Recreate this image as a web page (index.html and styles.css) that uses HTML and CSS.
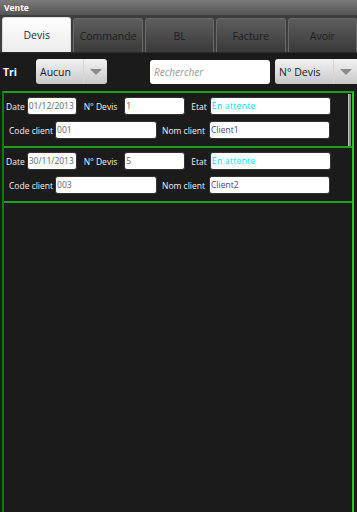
FILE: index.html
```html
<!DOCTYPE html>
<html lang="fr">
<head>
  <meta charset="UTF-8">
  <meta name="viewport" content="width=device-width, initial-scale=1.0">
  <title>Vente</title>
  <link rel="stylesheet" href="styles.css">
</head>
<body>
  <div class="title-bar">Vente</div>
  <div class="tabs">
    <div class="tab active">Devis</div>
    <div class="tab">Commande</div>
    <div class="tab">BL</div>
    <div class="tab">Facture</div>
    <div class="tab">Avoir</div>
  </div>
  <div class="toolbar">
    <span class="tri">Tri</span>
    <div class="spinner sort">
      <span class="spinner-text">Aucun</span>
      <span class="spinner-arrow"></span>
    </div>
    <div class="search">Rechercher</div>
    <div class="spinner field">
      <span class="spinner-text">N° Devis</span>
      <span class="spinner-arrow"></span>
    </div>
  </div>
  <div class="list">
    <div class="item">
      <div class="row">
        <span class="label l-date">Date</span>
        <span class="box w-date">01/12/2013</span>
        <span class="label l-num">N° Devis</span>
        <span class="box w-num">1</span>
        <span class="label l-etat">Etat</span>
        <span class="box w-wide etat">En attente</span>
      </div>
      <div class="row">
        <span class="label l-code">Code client</span>
        <span class="box w-code">001</span>
        <span class="label l-nom">Nom client</span>
        <span class="box w-wide client">Client1</span>
      </div>
      <div class="scrollbar"></div>
    </div>
    <div class="item">
      <div class="row">
        <span class="label l-date">Date</span>
        <span class="box w-date">30/11/2013</span>
        <span class="label l-num">N° Devis</span>
        <span class="box w-num">5</span>
        <span class="label l-etat">Etat</span>
        <span class="box w-wide etat">En attente</span>
      </div>
      <div class="row">
        <span class="label l-code">Code client</span>
        <span class="box w-code">003</span>
        <span class="label l-nom">Nom client</span>
        <span class="box w-wide client">Client2</span>
      </div>
    </div>
  </div>
</body>
</html>
```

FILE: styles.css
```css
* {
  margin: 0;
  padding: 0;
  box-sizing: border-box;
}
html, body {
  height: 100%;
}
body {
  display: flex;
  flex-direction: column;
  background: #1b1b1b;
  font-family: 'Open Sans', 'DejaVu Sans', sans-serif;
  overflow: hidden;
}
.title-bar {
  height: 15px;
  background: linear-gradient(#7b7b7b, #545454);
  color: #fff;
  font-size: 8.5px;
  font-weight: bold;
  line-height: 15px;
  padding-left: 4px;
}
.tabs {
  display: flex;
  gap: 2px;
  height: 38px;
  padding: 2px 0 0 2px;
  background: #3d3d3d;
  border-bottom: 1px solid #2a2a2a;
}
.tab {
  flex: 1;
  display: flex;
  align-items: center;
  justify-content: center;
  margin-top: 1px;
  background: linear-gradient(#5d5d5d, #3a3a3a);
  border: 1px solid #6a6a6a;
  border-bottom: none;
  border-radius: 3px 3px 0 0;
  color: #1e1e1e;
  font-size: 10.5px;
}
.tab.active {
  margin-top: 0;
  background: linear-gradient(#ffffff, #ebebeb);
  border-color: #dcdcdc;
  color: #2a2a4a;
}
.toolbar {
  display: flex;
  align-items: center;
  height: 37px;
  padding: 0 0 0 3px;
  background: #1b1b1b;
}
.tri {
  color: #fff;
  font-size: 10.5px;
  font-weight: bold;
  width: 33px;
}
.spinner {
  display: flex;
  align-items: center;
  height: 25px;
  background: linear-gradient(#f2f2f2, #c9c9c9);
  border-radius: 3px;
  color: #222;
  font-size: 10.5px;
}
.spinner-text {
  flex: 1;
  padding-left: 4px;
}
.spinner-arrow {
  position: relative;
  width: 24px;
  height: 100%;
  border-left: 1px solid #d6d6d6;
}
.spinner-arrow::after {
  content: '';
  position: absolute;
  left: 6px;
  top: 10px;
  border-left: 6px solid transparent;
  border-right: 6px solid transparent;
  border-top: 6px solid #8a8a8a;
}
.sort {
  width: 71px;
}
.search {
  width: 120px;
  height: 24px;
  margin-left: 43px;
  padding-left: 4px;
  background: #fff;
  border-radius: 3px;
  color: #999;
  font-size: 10px;
  font-style: italic;
  line-height: 24px;
}
.field {
  flex: 1;
  margin-left: 5px;
  border-radius: 3px 0 0 3px;
}
.list {
  flex: 1;
  margin: 1px 3px 0 2px;
  border-top: 2px solid #1ea01e;
  border-left: 2px solid #107a10;
  border-right: 2px solid #17d417;
}
.item {
  position: relative;
  height: 55px;
  padding: 4px 0 0 2px;
  border-bottom: 2px solid #1ea01e;
}
.row {
  display: flex;
  align-items: center;
  height: 18px;
  margin-bottom: 6px;
}
.label {
  color: #f0f0f0;
  font-size: 8.5px;
}
.box {
  height: 18px;
  padding-left: 1px;
  background: #fff;
  border: 1px solid #333;
  border-radius: 3px;
  color: #666;
  font-size: 8.5px;
  line-height: 16px;
}
.l-date { margin-left: 0; }
.w-date { width: 50px; margin-left: 2px; }
.l-num { margin-left: 7px; }
.w-num { width: 61px; margin-left: 7px; }
.l-etat { margin-left: 6px; }
.w-wide { width: 121px; margin-left: 3px; }
.l-code { margin-left: 3px; }
.w-code { width: 102px; margin-left: 2px; }
.l-nom { margin-left: 5px; }
.l-nom + .w-wide { margin-left: 4px; }
.etat {
  color: #00e5ff;
  letter-spacing: 0.3px;
}
.client {
  color: #5a3a7a;
}
.scrollbar {
  position: absolute;
  right: 1px;
  top: 1px;
  width: 3px;
  height: 52px;
  background: #8c8c8c;
  border-left: 1px solid #c0c0c0;
}
```
